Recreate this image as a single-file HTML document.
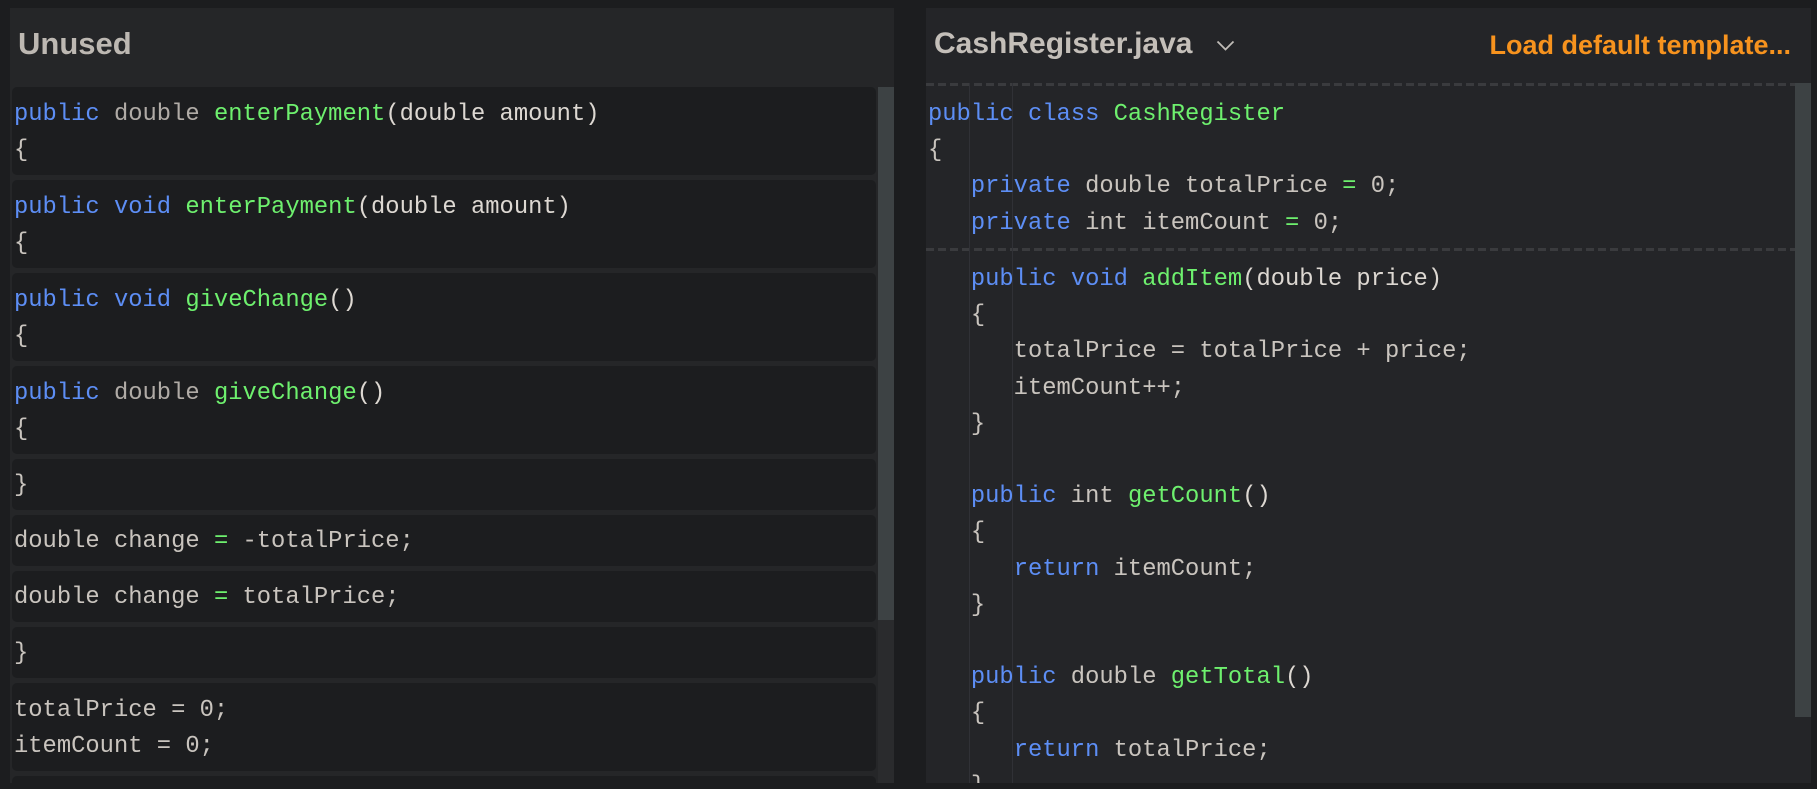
<!DOCTYPE html>
<html><head><meta charset="utf-8"><style>
*{margin:0;padding:0;box-sizing:border-box}
html,body{width:1817px;height:789px;overflow:hidden}
body{background:#1c1d1f;position:relative;font-family:"Liberation Mono",monospace}
.lp{position:absolute;left:10px;top:8px;width:884px;height:775px;background:#252628;overflow:hidden}
.h1{position:absolute;left:8px;top:18px;font:bold 31px "Liberation Sans Narrow","Liberation Sans",sans-serif;color:#bdb8b2}
.track{position:absolute;left:868px;top:79px;width:16px;height:700px;background:#2a2b2d}
.thumb{position:absolute;left:868px;top:79px;width:16px;height:533px;background:#3d4244}
.card{position:absolute;left:2px;width:864px;background:#1c1d1f;border-radius:5px;padding:10px 0 0 2px;font-size:23.8px;line-height:36px;color:#ddd8d2;white-space:pre;overflow:hidden}
.k{color:#5d8ef5}.t{color:#b0aba6}.f{color:#6ef06e}.g{color:#6ef06e}.n{color:#c9c4be}
.rp{position:absolute;left:926px;top:8px;width:885px;height:775px;background:#242528;overflow:hidden}
.h2{position:absolute;left:8px;top:19px;font:bold 30px "Liberation Sans Narrow","Liberation Sans",sans-serif;color:#c4bfb9}
.ld{position:absolute;right:20px;top:22px;font:bold 27px "Liberation Sans Narrow","Liberation Sans",sans-serif;color:#f7931e}
.dash{position:absolute;left:0;width:869px;height:3px;background:repeating-linear-gradient(90deg,#3a3b3e 0 8px,transparent 8px 12px)}
.guide{position:absolute;top:75px;width:1px;height:700px;background:#303136}
.code{position:absolute;left:2px;font-size:23.8px;line-height:36.2px;color:#c9c4be;white-space:pre}
.rthumb{position:absolute;left:869px;top:75px;width:16px;height:634px;background:#3d4244}
</style></head><body>
<div class="lp">
<div class="h1">Unused</div>
<div class="track"></div><div class="thumb"></div>
<div class="card" style="top:79px;height:88px"><span class="k">public</span> <span class="t">double</span> <span class="f">enterPayment</span>(double amount)
<span class="n">{</span></div>
<div class="card" style="top:172px;height:88px"><span class="k">public</span> <span class="k">void</span> <span class="f">enterPayment</span>(double amount)
<span class="n">{</span></div>
<div class="card" style="top:265px;height:88px"><span class="k">public</span> <span class="k">void</span> <span class="f">giveChange</span>()
<span class="n">{</span></div>
<div class="card" style="top:358px;height:88px"><span class="k">public</span> <span class="t">double</span> <span class="f">giveChange</span>()
<span class="n">{</span></div>
<div class="card" style="top:451px;height:51px;padding-top:9px"><span class="n">}</span></div>
<div class="card" style="top:507px;height:51px;padding-top:9px"><span class="n">double change <span class="g">=</span> -totalPrice;</span></div>
<div class="card" style="top:563px;height:51px;padding-top:9px"><span class="n">double change <span class="g">=</span> totalPrice;</span></div>
<div class="card" style="top:619px;height:51px;padding-top:9px"><span class="n">}</span></div>
<div class="card" style="top:675px;height:88px"><span class="n">totalPrice = 0;
itemCount = 0;</span></div>
<div class="card" style="top:768px;height:20px"></div>
</div>
<div class="rp">
<div class="h2">CashRegister.java</div>
<svg style="position:absolute;left:290px;top:32px" width="20" height="12" viewBox="0 0 20 12"><path d="M1.5 1.5 L9.5 9.5 L17.5 1.5" fill="none" stroke="#c0bcb7" stroke-width="1.8"/></svg>
<div class="ld">Load default template...</div>
<div class="dash" style="top:75px"></div>
<div class="dash" style="top:240px"></div>
<div class="guide" style="left:43px"></div>
<div class="guide" style="left:86px"></div>
<div class="rthumb"></div>
<div class="code" style="top:89px"><span class="k">public</span> <span class="k">class</span> <span class="f">CashRegister</span>
{
   <span class="k">private</span> double totalPrice <span class="g">=</span> 0;
   <span class="k">private</span> int itemCount <span class="g">=</span> 0;</div>
<div class="code" style="top:254px">   <span class="k">public</span> <span class="k">void</span> <span class="f">addItem</span><span style="color:#ddd8d2">(double price)</span>
   {
      totalPrice = totalPrice + price;
      itemCount++;
   }

   <span class="k">public</span> int <span class="f">getCount</span><span style="color:#ddd8d2">()</span>
   {
      <span class="k">return</span> itemCount;
   }

   <span class="k">public</span> double <span class="f">getTotal</span><span style="color:#ddd8d2">()</span>
   {
      <span class="k">return</span> totalPrice;
   }</div>
</div>
</body></html>
